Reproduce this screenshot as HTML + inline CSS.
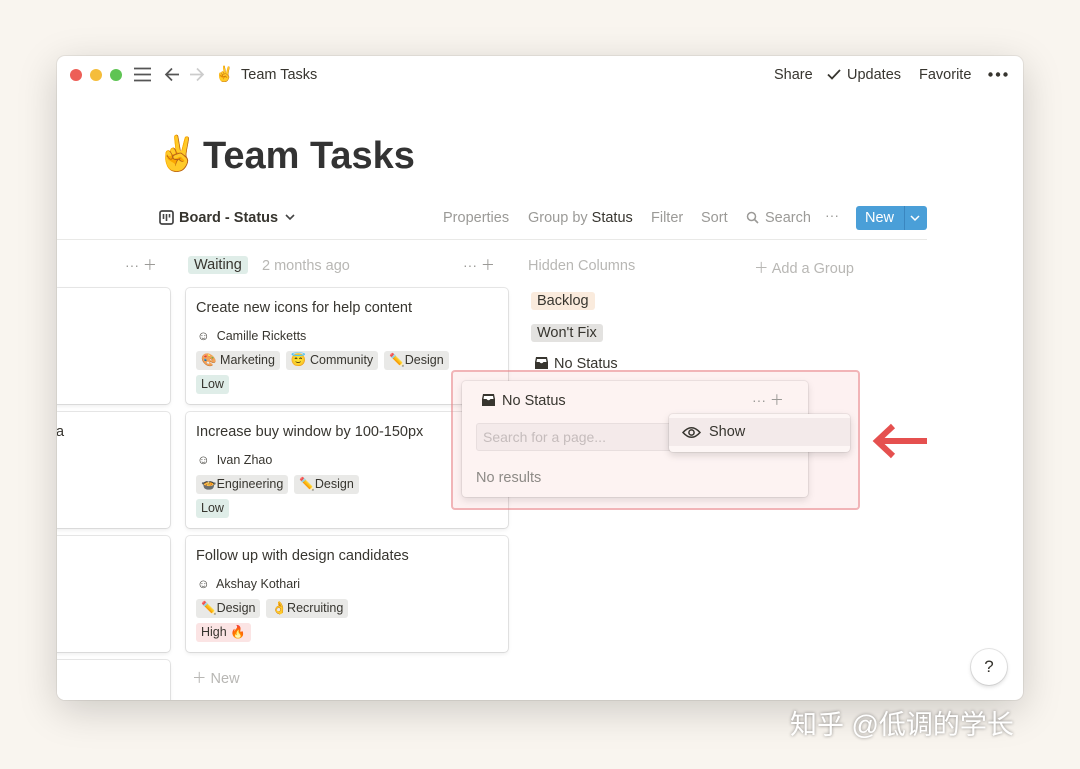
<!DOCTYPE html>
<html><head><meta charset="utf-8"><style>
*{box-sizing:border-box;margin:0;padding:0}
body{width:1080px;height:769px;background:#f9f5ef;font-family:"Liberation Sans","Noto Sans CJK SC",sans-serif;position:relative;overflow:hidden;color:#37352f}
.win{position:absolute;left:57px;top:56px;width:966px;height:644px;background:#fff;border-radius:8px;box-shadow:0 10px 40px rgba(0,0,0,.18),0 0 0 1px rgba(0,0,0,.06);overflow:hidden}
.a{position:absolute;white-space:nowrap}
.dot{position:absolute;top:13px;width:12px;height:12px;border-radius:50%}
.g{color:#9b9a97}
.card{position:absolute;background:#fff;border-radius:4px;box-shadow:0 0 0 1px rgba(15,15,15,.1),0 2px 4px rgba(15,15,15,.08)}
.tag{display:inline-block;font-size:12.5px;padding:1px 5px;border-radius:3px;background:#e9e9e7;color:#37352f;margin-right:6px;line-height:17px}
.t{font-size:14.5px;font-weight:500;color:#37352f}
.p{font-size:12.5px;color:#37352f}
</style></head><body>
<div class="win">
 <div class="dot" style="left:13px;background:#ed5f57"></div>
 <div class="dot" style="left:33px;background:#f5bd3a"></div>
 <div class="dot" style="left:53px;background:#5fc454"></div>
 <svg class="a" style="left:77px;top:11px" width="17" height="15"><path d="M0 1.5H17M0 7.5H17M0 13.5H17" stroke="#555" stroke-width="1.8"/></svg>
 <svg class="a" style="left:107px;top:11px" width="16" height="15"><path d="M15 7.5H2M8 1.5L2 7.5L8 13.5" stroke="#555" stroke-width="1.7" fill="none"/></svg>
 <svg class="a" style="left:132px;top:11px" width="16" height="15"><path d="M1 7.5H14M8 1.5L14 7.5L8 13.5" stroke="#ccc" stroke-width="1.7" fill="none"/></svg>
 <div class="a" style="left:158px;top:9px;font-size:15px">✌️</div>
 <div class="a" style="left:184px;top:11px;font-size:14.5px">Team Tasks</div>
 <div class="a" style="left:717px;top:11px;font-size:14.5px">Share</div>
 <svg class="a" style="left:770px;top:13px" width="14" height="11"><path d="M1 5.5L5 9.5L13 1" stroke="#37352f" stroke-width="1.8" fill="none"/></svg>
 <div class="a" style="left:790px;top:11px;font-size:14.5px">Updates</div>
 <div class="a" style="left:862px;top:11px;font-size:14.5px">Favorite</div>
 <svg class="a" style="left:931px;top:16px" width="20" height="5"><circle cx="2.5" cy="2.5" r="2.2" fill="#37352f"/><circle cx="10" cy="2.5" r="2.2" fill="#37352f"/><circle cx="17.5" cy="2.5" r="2.2" fill="#37352f"/></svg>

 <div class="a" style="left:99px;top:78px;font-size:34px">✌️</div>
 <div class="a" style="left:146px;top:79px;font-size:38px;font-weight:bold;color:#333">Team Tasks</div>

 <svg class="a" style="left:102px;top:154px" width="15" height="15"><rect x="1" y="1" width="13" height="13" rx="2" stroke="#444" stroke-width="1.7" fill="none"/><path d="M4.5 4V9M7.5 4V11M10.5 4V7.5" stroke="#444" stroke-width="1.6"/></svg>
 <div class="a" style="left:122px;top:154px;font-size:14.5px;font-weight:bold">Board - Status</div>
 <svg class="a" style="left:228px;top:158px" width="10" height="7"><path d="M1 1L5 5L9 1" stroke="#444" stroke-width="1.6" fill="none"/></svg>
 <div class="a g" style="left:386px;top:154px;font-size:14.5px">Properties</div>
 <div class="a g" style="left:471px;top:154px;font-size:14.5px">Group by <span style="color:#37352f">Status</span></div>
 <div class="a g" style="left:594px;top:154px;font-size:14.5px">Filter</div>
 <div class="a g" style="left:644px;top:154px;font-size:14.5px">Sort</div>
 <svg class="a" style="left:689px;top:155px" width="13" height="13"><circle cx="5.5" cy="5.5" r="4" stroke="#9b9a97" stroke-width="1.5" fill="none"/><path d="M8.5 8.5L12 12" stroke="#9b9a97" stroke-width="1.6"/></svg>
 <div class="a g" style="left:708px;top:154px;font-size:14.5px">Search</div>
 <div class="a g" style="left:768px;top:151px;font-size:14px">···</div>
 <div class="a" style="left:799px;top:150px;width:71px;height:24px;background:#4a9fd8;border-radius:3px;color:#fff;font-size:14.5px;font-weight:500;padding:4px 0 0 9px">New<span style="position:absolute;left:48px;top:0;width:1px;height:24px;background:#3a86bf"></span><svg style="position:absolute;left:54px;top:9px" width="10" height="7"><path d="M1 1L5 5L9 1" stroke="#fff" stroke-width="1.5" fill="none"/></svg></div>
 <div class="a" style="left:0;top:183px;width:870px;height:1px;background:#e9e9e7"></div>

 <div class="a g" style="left:68px;top:199px;font-size:14px">··· ＋</div>
 <div class="a" style="left:131px;top:200px;font-size:14.5px;background:#dfede8;padding:1px 6px;border-radius:3px">Waiting</div>
 <div class="a g" style="left:205px;top:202px;font-size:14.5px;color:#b8b7b4">2 months ago</div>
 <div class="a g" style="left:406px;top:199px;font-size:14px">··· ＋</div>
 <div class="a" style="left:471px;top:202px;font-size:14.5px;color:#b8b7b4">Hidden Columns</div>
 <div class="a" style="left:697px;top:201px;font-size:14.5px;color:#b8b7b4">＋ Add a Group</div>

 <div class="card" style="left:-5px;top:232px;width:118px;height:116px"></div>
 <div class="card" style="left:-5px;top:356px;width:118px;height:116px"><div class="a t" style="left:0;top:12px">&nbsp;a</div></div>
 <div class="card" style="left:-5px;top:480px;width:118px;height:116px"></div>
 <div class="card" style="left:-5px;top:604px;width:118px;height:60px"></div>

 <div class="card" style="left:129px;top:232px;width:322px;height:116px">
  <div class="a t" style="left:10px;top:12px">Create new icons for help content</div>
  <div class="a p" style="left:11px;top:41px">☺&nbsp; Camille Ricketts</div>
  <div class="a" style="left:10px;top:63px"><span class="tag">🎨 Marketing</span><span class="tag">😇 Community</span><span class="tag">✏️Design</span></div>
  <div class="a" style="left:10px;top:87px"><span class="tag" style="background:#dfede8">Low</span></div>
 </div>
 <div class="card" style="left:129px;top:356px;width:322px;height:116px">
  <div class="a t" style="left:10px;top:12px">Increase buy window by 100-150px</div>
  <div class="a p" style="left:11px;top:41px">☺&nbsp; Ivan Zhao</div>
  <div class="a" style="left:10px;top:63px"><span class="tag">🍲Engineering</span><span class="tag">✏️Design</span></div>
  <div class="a" style="left:10px;top:87px"><span class="tag" style="background:#dfede8">Low</span></div>
 </div>
 <div class="card" style="left:129px;top:480px;width:322px;height:116px">
  <div class="a t" style="left:10px;top:12px">Follow up with design candidates</div>
  <div class="a p" style="left:11px;top:41px">☺&nbsp; Akshay Kothari</div>
  <div class="a" style="left:10px;top:63px"><span class="tag">✏️Design</span><span class="tag">👌Recruiting</span></div>
  <div class="a" style="left:10px;top:87px"><span class="tag" style="background:#fbe4e4">High 🔥</span></div>
 </div>
 <div class="a" style="left:135px;top:611px;font-size:14.5px;color:#b8b7b4">＋ New</div>

 <div class="a" style="left:474px;top:236px;font-size:14.5px;background:#faebdd;padding:1px 6px;border-radius:3px">Backlog</div>
 <div class="a" style="left:474px;top:268px;font-size:14.5px;background:#e3e2e0;padding:1px 6px;border-radius:3px">Won't Fix</div>
 <svg class="a" style="left:477px;top:300px" width="15" height="14"><path d="M2 1H13L14 6V13H1V6Z" fill="#37352f"/><path d="M3 3H12L12.5 6H9.5Q7.5 8.5 5.5 6H2.5Z" fill="#fff"/></svg>
 <div class="a" style="left:497px;top:300px;font-size:14.5px">No Status</div>

 <div class="a" style="left:394px;top:314px;width:409px;height:140px;background:rgba(240,120,120,.1);border:2px solid rgba(232,130,135,.55);border-radius:4px"></div>
 <div class="a" style="left:405px;top:325px;width:346px;height:116px;background:#fdf3f2;border-radius:4px;box-shadow:0 0 0 1px rgba(15,15,15,.06),0 3px 8px rgba(15,15,15,.12)">
  <svg class="a" style="left:19px;top:12px" width="15" height="14"><path d="M2 1H13L14 6V13H1V6Z" fill="#37352f"/><path d="M3 3H12L12.5 6H9.5Q7.5 8.5 5.5 6H2.5Z" fill="#fff"/></svg>
  <div class="a" style="left:40px;top:12px;font-size:14.5px">No Status</div>
  <div class="a g" style="left:290px;top:9px;font-size:14px">··· ＋</div>
  <div class="a" style="left:14px;top:42px;width:200px;height:28px;background:#f4eaea;border:1px solid #e8dede;border-radius:3px;font-size:14px;color:#c5bcbc;padding:5px 6px">Search for a page...</div>
  <div class="a g" style="left:14px;top:89px;font-size:14.5px;color:#8d8a86">No results</div>
 </div>
 <div class="a" style="left:612px;top:358px;width:181px;height:38px;background:#fdf6f5;border-radius:4px;box-shadow:0 0 0 1px rgba(15,15,15,.06),0 3px 8px rgba(15,15,15,.15)">
  <div class="a" style="left:0;top:4px;width:181px;height:28px;background:#f3eaea"></div>
  <svg class="a" style="left:13px;top:12px" width="19" height="13"><path d="M1 6.5Q9.5 -3 18 6.5Q9.5 16 1 6.5Z" stroke="#37352f" stroke-width="1.5" fill="none"/><circle cx="9.5" cy="6.5" r="2.6" stroke="#37352f" stroke-width="1.5" fill="none"/></svg>
  <div class="a" style="left:40px;top:10px;font-size:14.5px">Show</div>
 </div>
 <svg class="a" style="left:810px;top:362px" width="66" height="46" viewBox="0 0 66 46"><path d="M60 23H12M26 8L10 23L26 38" stroke="#fff" stroke-width="13" fill="none" stroke-linecap="round" stroke-linejoin="round"/><path d="M60 23H12M26 8L10 23L26 38" stroke="#e5504f" stroke-width="6" fill="none" stroke-linejoin="miter"/></svg>
 <div class="a" style="left:914px;top:593px;width:36px;height:36px;border-radius:50%;background:#fff;box-shadow:0 0 0 1px rgba(15,15,15,.1),0 2px 4px rgba(15,15,15,.15);font-size:17px;text-align:center;line-height:36px">?</div>
</div>
<div class="a" style="left:790px;top:703px;font-size:27px;color:#fff;text-shadow:0 0 3px rgba(0,0,0,.45)">知乎 @低调的学长</div>
</body></html>
